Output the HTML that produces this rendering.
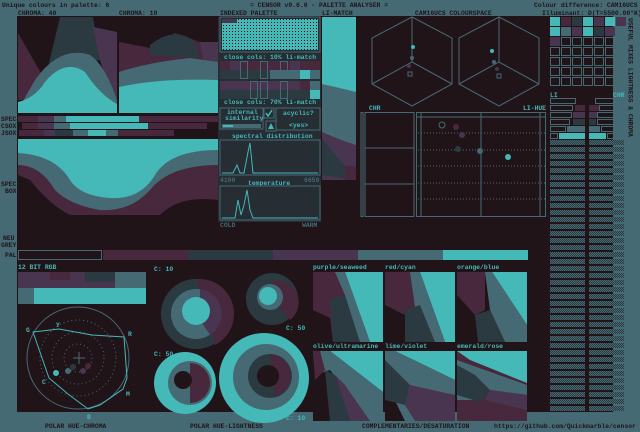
<!DOCTYPE html>
<html><head><meta charset="utf-8"><style>
html,body{margin:0;padding:0;background:#466a74;}
svg{display:block}
text{font-family:"Liberation Mono",monospace;font-size:6.4px;font-weight:bold}
.d{fill:#1e1418}
.c{fill:#45b8b8}
</style></head><body>
<svg width="640" height="432" viewBox="0 0 640 432" xmlns="http://www.w3.org/2000/svg">
<defs>
<pattern id="chk" width="2" height="2" patternUnits="userSpaceOnUse"><rect width="2" height="2" fill="#2b3a41"/><rect width="1" height="1" fill="#466a74"/><rect x="1" y="1" width="1" height="1" fill="#466a74"/></pattern>
<pattern id="dots" width="3" height="3" patternUnits="userSpaceOnUse"><rect width="3" height="3" fill="#45b8b8"/><rect x="1" y="1" width="1" height="1" fill="#1e1418"/></pattern>
</defs>
<rect width="640" height="432" fill="#466a74"/>
<rect x="17" y="16" width="596" height="396" fill="#211419"/>
<!-- top text -->
<text x="2" y="7" class="d">Unique colours in palette: 6</text>
<text x="250" y="7" class="d">= CENSOR v0.6.0 - PALETTE ANALYSER =</text>
<text x="534" y="7" class="d" font-size="6">Colour difference: CAM16UCS</text>
<text x="18" y="15" class="d">CHROMA: 40</text>
<text x="119" y="15" class="d">CHROMA: 10</text>
<text x="220" y="15" class="d">INDEXED PALETTE</text>
<text x="322" y="15" class="d">LI-MATCH</text>
<text x="415" y="15" class="d">CAM16UCS COLOURSPACE</text>
<text x="542" y="15" class="d" font-size="6">Illuminant: D(T=5500.00°K)</text>

<!-- chroma 40 -->
<rect x="18" y="17" width="99" height="96" fill="#211419"/>
<polygon points="18,33 45,80 30,100 18,100" fill="#47283c"/>
<polygon points="60,17 93,17 100,60 60,65 45,80" fill="#2b3a41"/>
<polygon points="93,27 117,32 117,113 100,60" fill="#4a3550"/>
<path d="M18,110 L35,80 Q60,45 90,55 Q105,65 117,100 L117,113 L18,113Z" fill="#466a74"/>
<path d="M18,113 L18,102 Q35,98 45,82 Q65,58 85,72 Q100,95 117,104 L117,113Z" fill="#45b8b8"/>
<!-- chroma 10 -->
<rect x="119" y="40" width="99" height="73" fill="#211419"/>
<polygon points="119,42 150,48 175,33 200,42 218,42 218,70 119,72" fill="#47283c"/>
<path d="M150,45 Q175,25 195,42 L200,58 L150,55Z" fill="#2b3a41"/>
<polygon points="200,42 218,42 218,70 205,68" fill="#4a3550"/>
<path d="M119,72 Q150,62 190,58 L218,62 L218,113 L119,113Z" fill="#466a74"/>
<path d="M119,87 Q160,78 218,80 L218,113 L119,113Z" fill="#45b8b8"/>

<!-- spec bars -->
<text x="1" y="121" class="d">SPEC</text><text x="1" y="128" class="d">CSOX</text><text x="1" y="135" class="d">JSOX</text>
<rect x="18" y="116" width="200" height="6" fill="#47283c"/><rect x="38" y="116" width="16" height="6" fill="#4a3550"/><rect x="54" y="116" width="12" height="6" fill="#466a74"/><rect x="66" y="116" width="73" height="6" fill="#45b8b8"/>
<rect x="22" y="123" width="185" height="6" fill="#47283c"/><rect x="38" y="123" width="16" height="6" fill="#4a3550"/><rect x="54" y="123" width="16" height="6" fill="#466a74"/><rect x="70" y="123" width="78" height="6" fill="#45b8b8"/>
<rect x="19" y="130" width="155" height="6" fill="#47283c"/><rect x="44" y="130" width="11" height="6" fill="#4a3550"/><rect x="55" y="130" width="18" height="6" fill="#2b3a41"/><rect x="73" y="130" width="15" height="6" fill="#466a74"/><rect x="88" y="130" width="18" height="6" fill="#45b8b8"/><rect x="106" y="130" width="12" height="6" fill="#466a74"/>
<!-- spec box -->
<text x="1" y="186" class="d">SPEC</text><text x="5" y="193" class="d">BOX</text>
<rect x="18" y="139" width="200" height="78" fill="#211419"/>
<path d="M18,139 L218,139 L218,200 Q180,195 160,215 L70,215 Q50,205 30,180 L18,175Z" fill="#47283c"/>
<path d="M18,139 L218,139 L218,165 Q170,165 150,190 Q130,212 100,210 Q70,205 55,190 Q40,165 18,165Z" fill="#466a74"/>
<path d="M18,139 L218,139 L218,150 Q170,150 155,175 Q140,200 110,198 Q80,196 70,180 Q55,155 18,153Z" fill="#45b8b8"/>

<!-- palette column -->
<rect x="218" y="17" width="103" height="205" fill="#262d33"/>
<rect x="220" y="17" width="100" height="35" fill="none" stroke="#466a74"/>
<rect x="222" y="19" width="96" height="31" fill="url(#dots)"/>
<rect x="222" y="19" width="15" height="4" fill="#4a3550"/>
<text x="224" y="59" class="c">close cols: 10% li-match</text>
<g>
<rect x="220" y="61" width="100" height="18" fill="#47283c"/>
<rect x="220" y="70" width="100" height="9" fill="#2b3a41"/>
<rect x="230" y="61" width="10" height="9" fill="#4a3550"/>
<rect x="290" y="61" width="10" height="9" fill="#4a3550"/>
<rect x="270" y="70" width="30" height="9" fill="#466a74"/>
<rect x="300" y="70" width="10" height="9" fill="#45b8b8"/>
<rect x="310" y="70" width="10" height="9" fill="#466a74"/>
<rect x="220" y="81" width="100" height="18" fill="#4a3550"/>
<rect x="220" y="90" width="100" height="9" fill="#2b3a41"/>
<rect x="300" y="81" width="10" height="9" fill="#47283c"/>
<rect x="310" y="81" width="10" height="9" fill="#466a74"/>
<rect x="310" y="90" width="10" height="9" fill="#45b8b8"/>
<g fill="none" stroke="#466a74"><rect x="240.5" y="61.5" width="7" height="17"/><rect x="260.5" y="61.5" width="7" height="17"/><rect x="280.5" y="61.5" width="7" height="17"/><rect x="250.5" y="81.5" width="7" height="17"/><rect x="260.5" y="81.5" width="7" height="17"/><rect x="280.5" y="81.5" width="7" height="17"/></g>
</g>
<text x="224" y="104" class="c">close cols: 70% li-match</text>
<rect x="220" y="108" width="43" height="21" fill="none" stroke="#466a74"/>
<text x="227" y="114" class="c">internal</text><text x="225" y="120" class="c">similarity</text>
<rect x="222" y="124" width="39" height="4" fill="#466a74"/><rect x="223" y="125" width="10" height="2" fill="#45b8b8"/>
<rect x="264" y="108" width="10" height="10" fill="none" stroke="#466a74"/><path d="M266,113 L268,116 L272,110" fill="none" stroke="#45b8b8" stroke-width="1.5"/>
<rect x="266" y="121" width="10" height="10" fill="none" stroke="#466a74"/><polygon points="268,129 271,123 274,129" fill="#45b8b8"/>
<rect x="276" y="108" width="44" height="22" fill="none" stroke="#466a74"/>
<text x="283" y="115" class="c">acyclic?</text><text x="289" y="127" class="c">&lt;yes&gt;</text>
<text x="232" y="138" class="c">spectral distribution</text>
<rect x="220" y="140" width="100" height="35" fill="none" stroke="#466a74"/>
<path d="M222,173 L233,173 L237,165 L240,173 L244,173 L248,152 L250,143 L253,173 L318,173" fill="none" stroke="#45b8b8"/>
<text x="220" y="182" fill="#466a74">4100</text><text x="304" y="182" fill="#466a74">6650</text>
<text x="248" y="185" class="c">temperature</text>
<rect x="220" y="186" width="100" height="34" fill="none" stroke="#466a74"/>
<path d="M222,218 L235,218 L238,200 L241,215 L244,205 L247,190 L250,210 L253,218 L318,218" fill="none" stroke="#45b8b8"/>
<text x="220" y="227" fill="#466a74">COLD</text><text x="302" y="227" fill="#466a74">WARM</text>

<!-- li-match -->
<rect x="322" y="17" width="34" height="163" fill="#45b8b8"/>
<path d="M322,84 Q340,88 356,92 L356,180 L322,180Z" fill="#466a74"/>
<path d="M322,132 Q340,140 356,145 L356,180 L322,180Z" fill="#4a3550"/>
<path d="M322,138 Q335,155 345,166 L356,166 L356,180 L322,175Z" fill="#2b3a41"/>
<rect x="345" y="166" width="11" height="14" fill="#47283c"/>

<!-- hexagons -->
<g fill="none" stroke="#466a74">
<polygon points="412,17 452,38 452,84 412,106 372,84 372,38"/>
<path d="M412,17 L412,62 L372,84 M412,62 L452,84"/>
<polygon points="499,17 539,38 539,84 499,106 459,84 459,38"/>
<path d="M499,17 L499,62 L459,84 M499,62 L539,84"/>
<rect x="408" y="72" width="4" height="4"/><rect x="497" y="74" width="4" height="4"/>
</g>
<circle cx="413" cy="47" r="2" fill="#45b8b8"/><circle cx="412" cy="58" r="2" fill="#466a74"/><circle cx="409" cy="66" r="2" fill="#4a3550"/>
<circle cx="492" cy="51" r="2" fill="#45b8b8"/><circle cx="494" cy="62" r="2" fill="#466a74"/><circle cx="497" cy="69" r="2" fill="#4a3550"/>

<!-- chr / li-hue -->
<text x="369" y="110" class="c">CHR</text><text x="523" y="110" class="c">LI-HUE</text>
<g fill="none" stroke="#466a74">
<rect x="365" y="112.5" width="49" height="104"/>
<rect x="361" y="112.5" width="2" height="104"/>
<path d="M365,148 L414,148 M365,184 L414,184"/>
<rect x="416.5" y="112.5" width="129" height="104"/>
<path d="M421,112 L421,216 M481,112 L481,216 M540,112 L540,216 M416,117 L546,117"/>
<path d="M418,133 L545,133 M418,150 L545,150 M418,166 L545,166 M418,183 L545,183 M418,199 L545,199" stroke-dasharray="1,2"/>
<circle cx="442" cy="125" r="3"/>
</g>
<circle cx="456" cy="127" r="3" fill="#47283c"/><circle cx="462" cy="135" r="3" fill="#4a3550"/><circle cx="458" cy="149" r="3" fill="#2b3a41"/><circle cx="480" cy="151" r="3" fill="#466a74"/><circle cx="508" cy="157" r="3" fill="#45b8b8"/>

<!-- useful mixes -->
<g>
<rect x="550" y="17" width="10" height="9" fill="#45b8b8"/><rect x="561" y="17" width="10" height="9" fill="#47283c"/><rect x="572" y="17" width="10" height="9" fill="#2b3a41"/><rect x="583" y="17" width="10" height="9" fill="#45b8b8"/><rect x="594" y="17" width="10" height="9" fill="#4a3550"/><rect x="605" y="17" width="10" height="9" fill="#45b8b8"/><rect x="616" y="17" width="10" height="9" fill="#4a3550"/>
<rect x="550" y="27" width="10" height="9" fill="#45b8b8"/><rect x="561" y="27" width="10" height="9" fill="#466a74"/><rect x="572" y="27" width="10" height="9" fill="#4a3550"/><rect x="583" y="27" width="10" height="9" fill="#45b8b8"/><rect x="594" y="27" width="10" height="9" fill="#2b3a41"/><rect x="605" y="27" width="10" height="9" fill="#4a3550"/><rect x="616" y="27" width="10" height="9" fill="#466a74"/>
<rect x="550" y="37" width="10" height="9" fill="#4a3550"/>
</g>
<g fill="none" stroke="#466a74">
<rect x="561.5" y="37.5" width="9" height="8"/><rect x="572.5" y="37.5" width="9" height="8"/><rect x="583.5" y="37.5" width="9" height="8"/><rect x="594.5" y="37.5" width="9" height="8"/><rect x="605.5" y="37.5" width="9" height="8"/><rect x="616.5" y="37.5" width="9" height="8"/>
</g>
<g id="r" fill="none" stroke="#466a74">
<rect x="550.5" y="47.5" width="9" height="8"/><rect x="561.5" y="47.5" width="9" height="8"/><rect x="572.5" y="47.5" width="9" height="8"/><rect x="583.5" y="47.5" width="9" height="8"/><rect x="594.5" y="47.5" width="9" height="8"/><rect x="605.5" y="47.5" width="9" height="8"/><rect x="616.5" y="47.5" width="9" height="8"/>
</g>
<use href="#r" y="10"/><use href="#r" y="20"/><use href="#r" y="30"/>

<text x="550" y="97" class="c">LI</text><text x="613" y="97" class="c">CHR</text>
<g fill="none" stroke="#466a74">
<rect x="550.5" y="98.5" width="25" height="5"/><rect x="595.5" y="98.5" width="28" height="5"/>
<rect x="550.5" y="105.5" width="22" height="5"/><rect x="599.5" y="105.5" width="24" height="5"/>
<rect x="550.5" y="112.5" width="21" height="5"/><rect x="597.5" y="112.5" width="26" height="5"/>
<rect x="550.5" y="119.5" width="19" height="5"/><rect x="597.5" y="119.5" width="26" height="5"/>
<rect x="550.5" y="126.5" width="15" height="5"/><rect x="601.5" y="126.5" width="22" height="5"/>
<rect x="550.5" y="133.5" width="7" height="5"/><rect x="607.5" y="133.5" width="16" height="5"/>
</g>
<rect x="575" y="105" width="10" height="6" fill="#47283c"/><rect x="589" y="105" width="10" height="6" fill="#47283c"/>
<rect x="573" y="112" width="12" height="6" fill="#4a3550"/><rect x="589" y="112" width="8" height="6" fill="#4a3550"/>
<rect x="573" y="119" width="12" height="6" fill="#2b3a41"/><rect x="589" y="119" width="7" height="6" fill="#2b3a41"/>
<rect x="567" y="126" width="18" height="6" fill="#466a74"/><rect x="589" y="126" width="11" height="6" fill="#466a74"/>
<rect x="559" y="133" width="26" height="6" fill="#45b8b8"/><rect x="589" y="133" width="17" height="6" fill="#45b8b8"/>
<g id="cr"><rect x="550" y="140" width="35" height="5" fill="url(#chk)"/><rect x="589" y="140" width="35" height="5" fill="url(#chk)"/></g>
<use href="#cr" y="7"/><use href="#cr" y="14"/><use href="#cr" y="21"/><use href="#cr" y="28"/><use href="#cr" y="35"/><use href="#cr" y="42"/><use href="#cr" y="49"/><use href="#cr" y="56"/><use href="#cr" y="63"/><use href="#cr" y="70"/><use href="#cr" y="77"/><use href="#cr" y="84"/><use href="#cr" y="91"/><use href="#cr" y="98"/><use href="#cr" y="105"/><use href="#cr" y="112"/><use href="#cr" y="119"/><use href="#cr" y="126"/><use href="#cr" y="133"/><use href="#cr" y="140"/><use href="#cr" y="147"/><use href="#cr" y="154"/><use href="#cr" y="161"/><use href="#cr" y="168"/><use href="#cr" y="175"/><use href="#cr" y="182"/><use href="#cr" y="189"/><use href="#cr" y="196"/><use href="#cr" y="203"/><use href="#cr" y="210"/><use href="#cr" y="217"/><use href="#cr" y="224"/><use href="#cr" y="231"/><use href="#cr" y="238"/><use href="#cr" y="245"/><use href="#cr" y="252"/><use href="#cr" y="259"/><use href="#cr" y="266"/>
<text x="0" y="0" class="d" transform="translate(630,18)" writing-mode="tb" font-size="6">USEFUL MIXES LIGHTNESS &amp; CHROMA</text>

<!-- neu grey pal -->
<text x="3" y="240" class="d">NEU</text><text x="1" y="247" class="d">GREY</text><text x="5" y="257" class="d">PAL</text>
<rect x="18.5" y="250.5" width="83" height="9" fill="none" stroke="#466a74"/>
<rect x="103" y="250" width="85" height="10" fill="#47283c"/><rect x="188" y="250" width="85" height="10" fill="#2b3a41"/><rect x="273" y="250" width="85" height="10" fill="#4a3550"/><rect x="358" y="250" width="85" height="10" fill="#466a74"/><rect x="443" y="250" width="85" height="10" fill="#45b8b8"/>

<!-- 12 bit rgb -->
<text x="18" y="269" class="c">12 BIT RGB</text>
<rect x="18" y="272" width="128" height="16" fill="#4a3550"/>
<rect x="50" y="272" width="20" height="8" fill="#47283c"/><rect x="85" y="272" width="30" height="10" fill="#2b3a41"/><rect x="115" y="272" width="15" height="16" fill="#466a74"/><rect x="130" y="272" width="16" height="16" fill="#466a74"/>
<rect x="18" y="288" width="128" height="16" fill="#45b8b8"/><rect x="18" y="288" width="16" height="16" fill="#466a74"/>

<!-- polar hue chroma -->
<g fill="none" stroke="#466a74">
<circle cx="78" cy="358" r="51"/>
<circle cx="78" cy="358" r="38" stroke-dasharray="1,3"/>
<circle cx="78" cy="358" r="26" stroke-dasharray="1,3"/>
<circle cx="78" cy="358" r="14" stroke-dasharray="1,3"/>
<path d="M73,358 L85,358 M79,352 L79,364"/>
</g>
<path d="M33,332 L59,329 L92,335 L124,337 L127,378 L123,389 L100,405 L88,409 L68,394 L49,378 Z" fill="none" stroke="#45b8b8"/>
<circle cx="56" cy="373" r="3" fill="#45b8b8"/><circle cx="68" cy="371" r="3" fill="#466a74"/><circle cx="73" cy="367" r="3" fill="#2b3a41"/><circle cx="83" cy="371" r="3" fill="#4a3550"/><circle cx="88" cy="366" r="3" fill="#47283c"/>
<text x="26" y="332" class="c">G</text><text x="56" y="327" class="c">Y</text><text x="128" y="336" class="c">R</text><text x="42" y="384" class="c">C</text><text x="126" y="396" class="c">M</text><text x="87" y="419" class="c">B</text>

<!-- polar hue lightness -->
<text x="154" y="271" class="c">C: 10</text>
<circle cx="196" cy="314" r="35" fill="#2b3a41"/>
<path d="M196,279 A35,35 0 0 1 215,345 Z" fill="#47283c"/>
<circle cx="196" cy="314" r="25" fill="#466a74"/>
<path d="M200,289 A25,25 0 0 1 210,335 L200,320Z" fill="#4a3550"/>
<circle cx="196" cy="311" r="14" fill="#45b8b8"/>
<circle cx="272" cy="299" r="26" fill="#2b3a41"/>
<path d="M272,281 A22,22 0 0 1 290,320 L272,300Z" fill="#47283c"/>
<circle cx="270" cy="297" r="13" fill="#466a74"/><circle cx="268" cy="296" r="9" fill="#45b8b8"/>
<text x="286" y="330" class="c">C: 50</text>
<text x="154" y="356" class="c">C: 50</text>
<circle cx="185" cy="383" r="31" fill="#45b8b8"/>
<circle cx="190" cy="383" r="22" fill="#466a74"/>
<path d="M190,363 A20,20 0 0 1 190,403 Z" fill="#47283c"/>
<circle cx="183" cy="380" r="9" fill="#211419"/>
<circle cx="264" cy="378" r="45" fill="#45b8b8"/>
<circle cx="266" cy="377" r="33" fill="#466a74"/>
<circle cx="270" cy="376" r="22" fill="#2b3a41"/>
<path d="M270,354 A22,22 0 0 1 275,397 Z" fill="#47283c"/>
<circle cx="268" cy="376" r="11" fill="#211419"/>
<text x="286" y="420" class="c">C: 10</text>

<!-- complementaries -->
<text x="313" y="269" class="c">purple/seaweed</text><text x="385" y="269" class="c">red/cyan</text><text x="457" y="269" class="c">orange/blue</text>
<text x="313" y="348" class="c">olive/ultramarine</text><text x="385" y="348" class="c">lime/violet</text><text x="457" y="348" class="c">emerald/rose</text>
<g>
<rect x="313" y="272" width="70" height="70" fill="#47283c"/>
<polygon points="345,272 383,272 383,342 370,342" fill="#45b8b8"/>
<polygon points="335,272 345,272 370,342 345,342 345,295" fill="#466a74"/>
<polygon points="330,300 345,295 360,342 333,342" fill="#2b3a41"/>
<polygon points="313,310 330,318 333,342 313,342" fill="#211419"/>
</g>
<g>
<rect x="385" y="272" width="70" height="70" fill="#47283c"/>
<polygon points="420,272 455,272 455,342 445,342" fill="#45b8b8"/>
<polygon points="410,272 420,272 445,342 420,342" fill="#466a74"/>
<polygon points="405,310 420,305 435,342 405,342" fill="#2b3a41"/>
<polygon points="385,305 405,315 405,342 385,342" fill="#211419"/>
</g>
<g>
<rect x="457" y="272" width="70" height="70" fill="#211419"/>
<polygon points="457,272 485,272 485,310 475,315 457,295" fill="#47283c"/>
<polygon points="492,272 527,272 527,325" fill="#45b8b8"/>
<polygon points="485,272 492,272 527,325 527,342 505,342 490,310" fill="#466a74"/>
<polygon points="475,315 490,310 505,342 478,342" fill="#2b3a41"/>
</g>
<g>
<rect x="313" y="351" width="70" height="70" fill="#211419"/>
<polygon points="330,351 383,351 383,392" fill="#45b8b8"/>
<polygon points="313,351 330,351 383,392 383,421 370,421 330,370 315,375" fill="#466a74"/>
<polygon points="325,370 335,375 350,421 330,421" fill="#2b3a41"/>
<polygon points="335,375 345,385 370,421 350,421" fill="#4a3550"/>
<polygon points="313,351 320,351 325,370 315,380" fill="#47283c"/>
</g>
<g>
<rect x="385" y="351" width="70" height="70" fill="#211419"/>
<polygon points="395,351 455,351 455,380" fill="#45b8b8"/>
<polygon points="385,351 395,351 455,380 455,421 405,421 385,380" fill="#466a74"/>
<polygon points="385,360 410,385 405,405 385,400" fill="#2b3a41"/>
<polygon points="410,385 455,395 455,421 415,421 405,405" fill="#4a3550"/>
</g>
<g>
<rect x="457" y="351" width="70" height="70" fill="#47283c"/>
<polygon points="457,351 527,351 527,383 470,360" fill="#45b8b8"/>
<polygon points="457,360 527,385 527,395 490,390 475,400 457,400" fill="#466a74"/>
<polygon points="457,365 475,375 490,390 480,402 457,395" fill="#2b3a41"/>
<polygon points="490,390 527,395 527,410 485,400" fill="#4a3550"/>
</g>

<!-- bottom labels -->
<text x="45" y="428" class="d">POLAR HUE-CHROMA</text>
<text x="190" y="428" class="d">POLAR HUE-LIGHTNESS</text>
<text x="362" y="428" class="d">COMPLEMENTARIES/DESATURATION</text>
<text x="494" y="428" class="d" font-size="6">https://github.com/Quickmarble/censor</text>
</svg>
</body></html>
